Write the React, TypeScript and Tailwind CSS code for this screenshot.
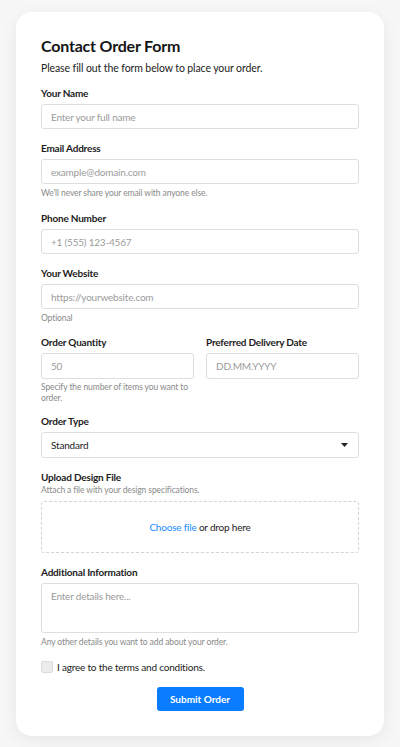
import React, { useState } from 'react';

const font = { fontFamily: 'Lato, "Open Sans", sans-serif' };

const Label: React.FC<{ children: React.ReactNode; className?: string }> = ({ children, className = 'mb-[4px]' }) => (
    <label className={`block text-[10px] leading-[14px] font-bold tracking-[-0.2px] text-[#1c1c1c] ${className}`}>{children}</label>
);

const Help: React.FC<{ children: React.ReactNode; className?: string }> = ({ children, className = 'leading-[12px]' }) => (
    <p className={`mt-[3px] text-[8.5px] tracking-[-0.1px] text-[#8a8a8a] ${className}`}>{children}</p>
);

const inputCls =
    'block w-full h-[25px] rounded-[3px] border border-[#dedede] bg-white px-[9px] text-[10px] tracking-[-0.2px] text-[#333] placeholder:text-[#9b9b9b] outline-none';

const App: React.FC = () => {
    const [agree, setAgree] = useState(false);

    return (
        <div className="min-h-screen bg-[#f7f7f7] px-4 py-3" style={font}>
            <form className="rounded-2xl bg-white px-[25px] pt-[24px] pb-[25px] shadow-[0_4px_18px_rgba(0,0,0,0.07)]">
                <h1 className="text-[16px] leading-[20px] font-bold tracking-[-0.2px] text-[#151515]">Contact Order Form</h1>
                <p className="mt-[4px] text-[10.5px] leading-[16px] tracking-[-0.1px] text-[#222]">
                    Please fill out the form below to place your order.
                </p>

                <div className="mt-[10px]">
                    <Label>Your Name</Label>
                    <input className={inputCls} placeholder="Enter your full name" />
                </div>

                <div className="mt-[12px]">
                    <Label>Email Address</Label>
                    <input className={inputCls} placeholder="example@domain.com" />
                    <Help>We'll never share your email with anyone else.</Help>
                </div>

                <div className="mt-[12px]">
                    <Label>Phone Number</Label>
                    <input className={inputCls} placeholder="+1 (555) 123-4567" />
                </div>

                <div className="mt-[12px]">
                    <Label>Your Website</Label>
                    <input className={inputCls} placeholder="https://yourwebsite.com" />
                    <Help>Optional</Help>
                </div>

                <div className="mt-[11px] grid grid-cols-2 gap-x-[12px]">
                    <div>
                        <Label>Order Quantity</Label>
                        <input className={`${inputCls} h-[26px]`} placeholder="50" />
                        <Help className="leading-[10.5px]">Specify the number of items you want to order.</Help>
                    </div>
                    <div>
                        <Label>Preferred Delivery Date</Label>
                        <input className={`${inputCls} h-[26px]`} placeholder="DD.MM.YYYY" />
                    </div>
                </div>

                <div className="mt-[11px]">
                    <Label>Order Type</Label>
                    <div className="flex h-[26px] items-center justify-between rounded-[3px] border border-[#dedede] bg-white pl-[9px] pr-[10px] text-[10px] tracking-[-0.2px] text-[#222]">
                        <span>Standard</span>
                        <svg width="7" height="4" viewBox="0 0 7 4">
                            <path d="M0 0h7L3.5 4z" fill="#222" />
                        </svg>
                    </div>
                </div>

                <div className="mt-[12px]">
                    <Label className="mb-0">Upload Design File</Label>
                    <p className="text-[8.5px] leading-[12px] tracking-[-0.1px] text-[#8a8a8a]">Attach a file with your design specifications.</p>
                    <div className="mt-[5px] flex h-[52px] items-center justify-center rounded-[3px] border border-dashed border-[#d4d4d4] text-[10px] tracking-[-0.2px] text-[#222]">
                        <span className="text-[#1a8cff]">Choose file</span>
                        <span>&nbsp;or drop here</span>
                    </div>
                </div>

                <div className="mt-[12px]">
                    <Label>Additional Information</Label>
                    <textarea
                        className="block h-[50px] w-full resize-none rounded-[3px] border border-[#dedede] px-[9px] py-[6px] text-[10px] leading-[13px] tracking-[-0.2px] placeholder:text-[#9b9b9b] outline-none"
                        placeholder="Enter details here..."
                    />
                    <Help>Any other details you want to add about your order.</Help>
                </div>

                <label className="mt-[12px] flex items-center gap-[4px] text-[10px] leading-[14px] tracking-[-0.2px] text-[#222]">
                    <span
                        onClick={() => setAgree(!agree)}
                        className="h-[12px] w-[12px] rounded-[2px] border border-[#dcdcdc] bg-[#ececec]"
                    />
                    I agree to the terms and conditions.
                </label>

                <div className="mt-[13px] flex justify-center">
                    <button
                        type="button"
                        className="h-[24px] w-[87px] rounded-[3px] bg-[#0a7cff] text-[10px] font-bold text-white"
                    >
                        Submit Order
                    </button>
                </div>
            </form>
        </div>
    );
};

export default App;
